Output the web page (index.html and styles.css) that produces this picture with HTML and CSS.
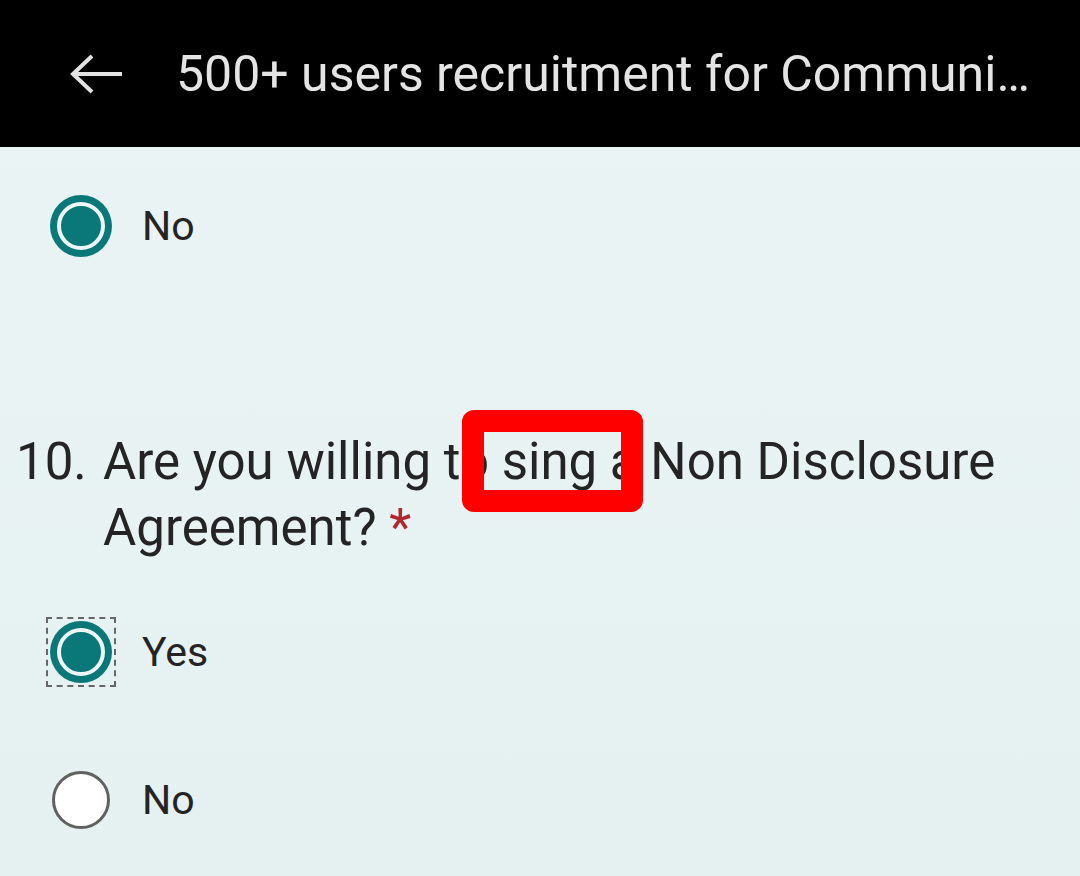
FILE: index.html
```html
<!DOCTYPE html>
<html lang="en">
<head>
<meta charset="utf-8">
<title>Form</title>
<link rel="stylesheet" href="styles.css">
</head>
<body>
<header class="topbar">
  <svg class="back" width="52" height="40" viewBox="0 0 52 40" aria-hidden="true">
    <path d="M3 20 H52 M22 2 L3 20 L22 38" fill="none" stroke="#e2e2e2" stroke-width="4" stroke-linecap="butt" stroke-linejoin="miter"/>
  </svg>
  <div class="title">500+ users recruitment for Community Research Study</div>
</header>
<main class="content">
  <div class="option first">
    <span class="focus"><span class="radio checked"><span class="dot"></span></span></span>
    <span class="label">No</span>
  </div>

  <div class="question">
    <span class="num">10.</span>
    <span class="qtext">Are you willing to sing a Non Disclosure Agreement? <span class="req">*</span></span>
    <div class="highlight"></div>
  </div>

  <div class="option yes">
    <span class="focus focused"><span class="radio checked"><span class="dot"></span></span></span>
    <span class="label">Yes</span>
  </div>

  <div class="option no">
    <span class="focus"><span class="radio empty"></span></span>
    <span class="label">No</span>
  </div>
</main>
</body>
</html>
```

FILE: styles.css
```css
* { box-sizing: border-box; }
html, body { margin: 0; padding: 0; }
body {
  width: 1080px;
  height: 876px;
  overflow: hidden;
  background: linear-gradient(#ebf4f5, #e5f1f1);
  font-family: Roboto, "Noto Sans", sans-serif;
  color: #242424;
}
.topbar {
  height: 147px;
  background: #000;
  display: flex;
  align-items: center;
  padding-left: 70px;
  padding-right: 44px;
}
.back { flex: none; margin-top: 1px; }
.title {
  margin-left: 54px;
  color: #e4e4e4;
  font-size: 50px;
  white-space: nowrap;
  overflow: hidden;
  text-overflow: ellipsis;
  min-width: 0;
  flex: 1;
}
.content {
  display: flex;
  flex-direction: column;
}
.option {
  display: flex;
  align-items: center;
  height: 70px;
  padding-left: 46px;
}
.option.first { margin-top: 44px; }
.option.yes { margin-top: 56px; }
.option.no { margin-top: 78px; }
.focus {
  width: 70px;
  height: 70px;
  border: 2px dashed transparent;
  display: flex;
  align-items: center;
  justify-content: center;
  flex: none;
}
.focus.focused { border-color: #666; }
.radio {
  border-radius: 50%;
  display: flex;
  align-items: center;
  justify-content: center;
}
.radio.checked {
  width: 62px;
  height: 62px;
  background: #0a7878;
}
.radio.checked .dot {
  width: 48px;
  height: 48px;
  border-radius: 50%;
  background: #0a7878;
  border: 4px solid #eef7f7;
}
.radio.empty {
  width: 58px;
  height: 58px;
  background: #fff;
  border: 3px solid #616161;
}
.label {
  margin-left: 26px;
  font-size: 41px;
}
.question {
  position: relative;
  margin-top: 168px;
  display: flex;
  font-size: 51px;
  line-height: 66px;
  padding-left: 16px;
  padding-right: 40px;
}
.num { width: 87px; flex: none; }
.qtext { flex: 1; }
.req { color: #b0282e; }
.highlight {
  position: absolute;
  left: 462px;
  top: -19px;
  width: 181px;
  height: 102px;
  border: 22px solid #ff0000;
  border-radius: 12px;
}
```
